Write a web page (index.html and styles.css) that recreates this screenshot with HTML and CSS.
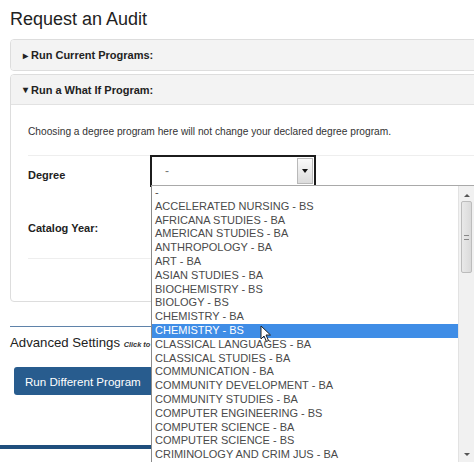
FILE: index.html
```html
<!DOCTYPE html>
<html lang="en">
    <head>
        <meta charset="UTF-8">
        <meta name="viewport" content="width=device-width, initial-scale=1.0">
        <title>Request an Audit</title>
        <link rel="stylesheet" href="styles.css">
    </head>
    <body>
        <div class="page">
            <h1>Request an Audit</h1>

            <div class="panel">
                <div class="panel-head"><span class="caret">&#9656;</span>Run Current Programs:</div>
            </div>

            <div class="panel">
                <div class="panel-head open"><span class="caret">&#9662;</span>Run a What If Program:</div>
                <div class="panel-body">
                    <p class="note">Choosing a degree program here will not change your declared degree program.</p>
                    <div class="row row-degree">
                        <label class="label">Degree</label>
                        <div class="select">
                            <span class="select-value">-</span>
                            <span class="select-btn"><span class="tri"></span></span>
                        </div>
                    </div>
                    <div class="row row-catalog">
                        <label class="label">Catalog Year:</label>
                    </div>
                </div>
            </div>

            <div class="divider"></div>
            <div class="advanced">Advanced Settings <span class="hint">Click to</span></div>
            <button type="button" class="btn-run">Run Different Program</button>
        </div>
        <div class="footer-bar"></div>

        <!-- open list of the degree select -->
        <div class="dropdown">
            <ul class="options">
                <li>-</li>
                <li>ACCELERATED NURSING - BS</li>
                <li>AFRICANA STUDIES - BA</li>
                <li>AMERICAN STUDIES - BA</li>
                <li>ANTHROPOLOGY - BA</li>
                <li>ART - BA</li>
                <li>ASIAN STUDIES - BA</li>
                <li>BIOCHEMISTRY - BS</li>
                <li>BIOLOGY - BS</li>
                <li>CHEMISTRY - BA</li>
                <li class="selected">CHEMISTRY - BS</li>
                <li>CLASSICAL LANGUAGES - BA</li>
                <li>CLASSICAL STUDIES - BA</li>
                <li>COMMUNICATION - BA</li>
                <li>COMMUNITY DEVELOPMENT - BA</li>
                <li>COMMUNITY STUDIES - BA</li>
                <li>COMPUTER ENGINEERING - BS</li>
                <li>COMPUTER SCIENCE - BA</li>
                <li>COMPUTER SCIENCE - BS</li>
                <li>CRIMINOLOGY AND CRIM JUS - BA</li>
            </ul>
            <div class="scrollbar">
                <span class="arrow-up"></span>
                <span class="thumb"><span class="grip"></span></span>
                <span class="arrow-down"></span>
            </div>
        </div>

        <svg class="cursor" width="12" height="18" viewBox="0 0 12 18">
            <path d="M1 1 L1 14 L4 11 L6.5 16.5 L8.5 15.5 L6 10 L10.5 10 Z" fill="#fff" stroke="#222" stroke-width="1"/>
        </svg>
    </body>
</html>
```

FILE: styles.css
```css
*{
    margin: 0;
    padding: 0;
    box-sizing: border-box;
}
body{
    background-color: #ffffff;
    font-family: "Liberation Sans", Arial, sans-serif;
    color: #333;
    width: 474px;
    height: 462px;
    overflow: hidden;
    position: relative;
}
.page{
    padding-left: 10px;
    width: 474px;
    overflow: hidden;
}
h1{
    font-size: 18px;
    font-weight: normal;
    color: #222;
    line-height: 24px;
    padding-top: 7px;
    margin-bottom: 8px;
}
.panel{
    width: 520px;
    border: 1px solid #dddddd;
    border-radius: 4px;
    margin-bottom: 3px;
    overflow: hidden;
}
.panel-head{
    height: 30px;
    background-color: #f3f3f3;
    display: flex;
    align-items: center;
    padding-left: 12px;
    font-size: 11px;
    font-weight: bold;
    color: #222;
}
.panel-head.open{
    border-bottom: 1px solid #e2e2e2;
}
.caret{
    font-size: 10px;
    margin-right: 3px;
}
.panel-body{
    padding: 20px 17px 42px;
}
.note{
    font-size: 10.2px;
    line-height: 14px;
    color: #333;
    margin-bottom: 16px;
}
.row{
    display: flex;
    border-top: 1px solid #eeeeee;
}
.row-degree{
    height: 46px;
}
.row-catalog{
    height: 58px;
    border-top: none;
    border-bottom: 1px solid #eeeeee;
}
.label{
    width: 122px;
    font-size: 11px;
    font-weight: bold;
    color: #222;
}
.row-degree .label{
    padding-top: 13px;
}
.row-catalog .label{
    padding-top: 21px;
}
.select{
    width: 166px;
    height: 32px;
    margin-top: -1px;
    border: 2px solid #1c1c1c;
    display: flex;
    align-items: center;
    justify-content: space-between;
    background-color: #fff;
}
.select-value{
    padding-left: 13px;
    font-size: 12px;
    color: #777;
}
.select-btn{
    width: 16px;
    height: 26px;
    margin-right: 1px;
    border: 1px solid #b9b9b9;
    background: linear-gradient(#fafafa, #dcdcdc);
    display: flex;
    align-items: center;
    justify-content: center;
}
.tri{
    border-left: 3px solid transparent;
    border-right: 3px solid transparent;
    border-top: 4px solid #111;
}
.divider{
    width: 141px;
    height: 1px;
    background-color: #5f83aa;
    margin-top: 24px;
}
.advanced{
    width: 141px;
    white-space: nowrap;
    font-size: 13.2px;
    line-height: 18px;
    color: #222;
    margin-top: 7px;
}
.hint{
    font-size: 7.4px;
    font-weight: bold;
    font-style: italic;
    color: #333;
}
.btn-run{
    display: block;
    margin: 13px 0 0 4px;
    width: 137px;
    height: 28px;
    border: none;
    border-radius: 3px 0 0 3px;
    background-color: #285c8e;
    color: #ffffff;
    font-family: "Liberation Sans", Arial, sans-serif;
    font-size: 11.6px;
    text-align: left;
    padding-left: 11px;
    white-space: nowrap;
}
.footer-bar{
    height: 4px;
    width: 474px;
    background-color: #1f4f7d;
    margin-top: 50px;
}

/* open dropdown list */
.dropdown{
    position: absolute;
    left: 151px;
    top: 185px;
    width: 323px;
    height: 277px;
    background-color: #fff;
    border-top: 1px solid #a9a9a9;
    border-left: 1px solid #8a8a8a;
    display: flex;
    overflow: hidden;
}
.options{
    list-style: none;
    width: 306px;
}
.options li{
    height: 13.8px;
    line-height: 13.8px;
    padding-left: 3px;
    font-size: 11px;
    color: #4a4a4a;
    white-space: nowrap;
}
.options li.selected{
    background-color: #3f8de6;
    color: #ffffff;
}
.scrollbar{
    width: 16px;
    height: 278px;
    background-color: #f1f1f1;
    border-left: 1px solid #e2e2e2;
    position: relative;
}
.arrow-up{
    position: absolute;
    left: 5px;
    top: 8px;
    border-left: 3px solid transparent;
    border-right: 3px solid transparent;
    border-bottom: 3px solid #555;
}
.arrow-down{
    position: absolute;
    left: 5px;
    top: 267px;
    border-left: 3px solid transparent;
    border-right: 3px solid transparent;
    border-top: 3px solid #555;
}
.thumb{
    position: absolute;
    left: 2px;
    top: 15px;
    width: 11px;
    height: 72px;
    border: 1px solid #bcbcbc;
    border-radius: 2px;
    background: linear-gradient(90deg, #e9e9e9, #dadada);
    display: flex;
    align-items: center;
    justify-content: center;
}
.grip{
    width: 5px;
    height: 5px;
    border-top: 1px solid #888;
    border-bottom: 1px solid #888;
}
.cursor{
    position: absolute;
    left: 260px;
    top: 325px;
}
```
